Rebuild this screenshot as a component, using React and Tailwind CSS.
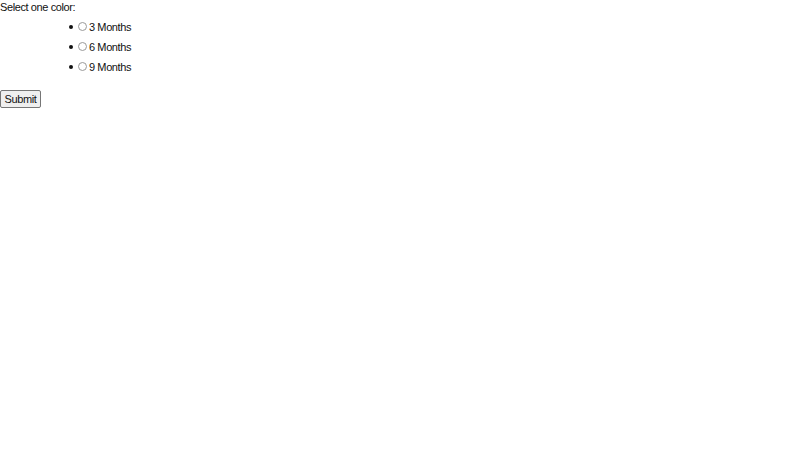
export default function App() {
  const items = ["3 Months", "6 Months", "9 Months"];
  return (
    <div
      className="bg-white w-[800px] h-[450px] text-[11px] tracking-[-0.4px] text-[#111]"
      style={{ fontFamily: '"Liberation Sans", Arial, sans-serif' }}
    >
      <div className="h-[14px] leading-[14px]">Select one color:</div>
      <ul className="pl-[69px] mt-[6px] flex flex-col gap-[6px]">
        {items.map((t) => (
          <li key={t} className="flex items-center h-[14px] leading-[14px]">
            <span className="w-[4px] h-[4px] rounded-full bg-[#111] mr-[5px]"></span>
            <span className="w-[9px] h-[9px] rounded-full border border-[#9a9a9a] bg-white mr-[2px] mt-[-1px]"></span>
            <span>{t}</span>
          </li>
        ))}
      </ul>
      <button className="mt-[16px] h-[18px] w-[41px] border border-[#767676] bg-[#efefef] rounded-[2px] text-[11px] tracking-[-0.4px] leading-[14px] flex items-center justify-center text-[#111]">
        Submit
      </button>
    </div>
  );
}
